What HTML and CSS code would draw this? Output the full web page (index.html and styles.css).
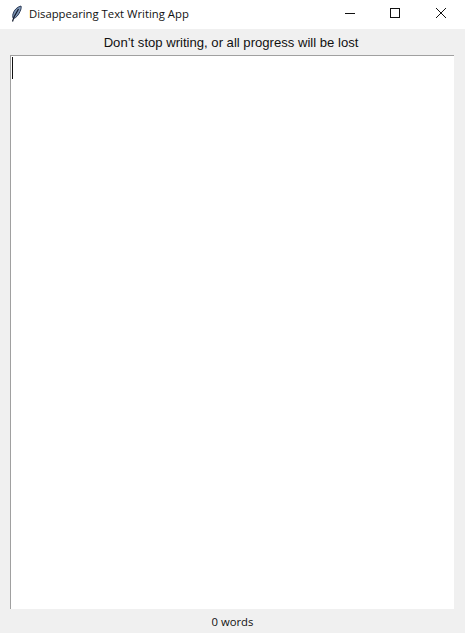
FILE: index.html
```html
<!DOCTYPE html>
<html lang="en">
<head>
    <meta charset="UTF-8">
    <title>Disappearing Text Writing App</title>
    <link rel="stylesheet" href="styles.css">
</head>
<body>

<div class="window">
    <header class="titlebar">
        <svg class="app-icon" width="14" height="18" viewBox="0 0 14 18">
            <path d="M12 1C8 2 5 5 4 9C3.500 11 3.500 12.500 4.500 13.500C7 13 9.500 10 11 6.500C12 4.500 12.500 2.500 12 1Z" fill="#7d95b4" stroke="#2c3c58" stroke-width="1"/>
            <path d="M9.500 4L5 12L3.500 16.500" fill="none" stroke="#10182a" stroke-width="1.200"/>
        </svg>
        <span class="title">Disappearing Text Writing App</span>
        <div class="controls">
            <button class="control">
                <svg width="12" height="12" viewBox="0 0 12 12"><path d="M2 6.500H12" stroke="#111" fill="none"/></svg>
            </button>
            <button class="control">
                <svg width="12" height="12" viewBox="0 0 12 12"><rect x="1.500" y="1.500" width="9" height="9" stroke="#111" fill="none"/></svg>
            </button>
            <button class="control">
                <svg width="12" height="12" viewBox="0 0 12 12"><path d="M1 1L11 11M11 1L1 11" stroke="#111" fill="none"/></svg>
            </button>
        </div>
    </header>

    <main class="content">
        <p class="prompt">Don’t stop writing, or all progress will be lost</p>
        <div class="editor"><span class="caret"></span></div>
        <p class="count">0 words</p>
    </main>
</div>

</body>
</html>
```

FILE: styles.css
```css
* {
    box-sizing: border-box;
}
body {
    margin: 0;
    background: #f0f0f0;
    color: #111;
    font-family: 'Open Sans', 'Noto Sans', sans-serif;
}
.window {
    display: flex;
    flex-direction: column;
    height: 633px;
    overflow: hidden;
}
.titlebar {
    display: flex;
    align-items: center;
    flex: 0 0 29px;
    padding: 0 0 1px 9px;
    background: #fff;
}
.app-icon {
    flex: none;
    margin-right: 6px;
}
.title {
    margin-bottom: 2px;
    font-size: 11.3px;
    white-space: nowrap;
}
.controls {
    display: flex;
    align-self: stretch;
    margin-left: auto;
    margin-right: 1px;
    padding-bottom: 2px;
}
.control {
    display: flex;
    align-items: center;
    justify-content: center;
    width: 46px;
    padding: 0;
    border: none;
    background: transparent;
}
.content {
    display: flex;
    flex-direction: column;
    flex: 1;
    min-height: 0;
}
.prompt {
    flex: 0 0 26px;
    margin: 0;
    padding: 1px 3px 0 0;
    font-family: 'Liberation Sans', Arial, sans-serif;
    font-size: 13.100px;
    line-height: 25px;
    text-align: center;
}
.editor {
    flex: 1;
    margin: 0 11px 0 10px;
    padding: 1px;
    background: #fff;
    border-top: 1px solid #a0a0a0;
    border-left: 1px solid #a0a0a0;
}
.caret {
    display: block;
    width: 1px;
    height: 22px;
    background: #111;
}
.count {
    flex: 0 0 24px;
    margin: 0;
    padding-top: 1px;
    font-size: 11.300px;
    line-height: 23px;
    text-align: center;
}
```
